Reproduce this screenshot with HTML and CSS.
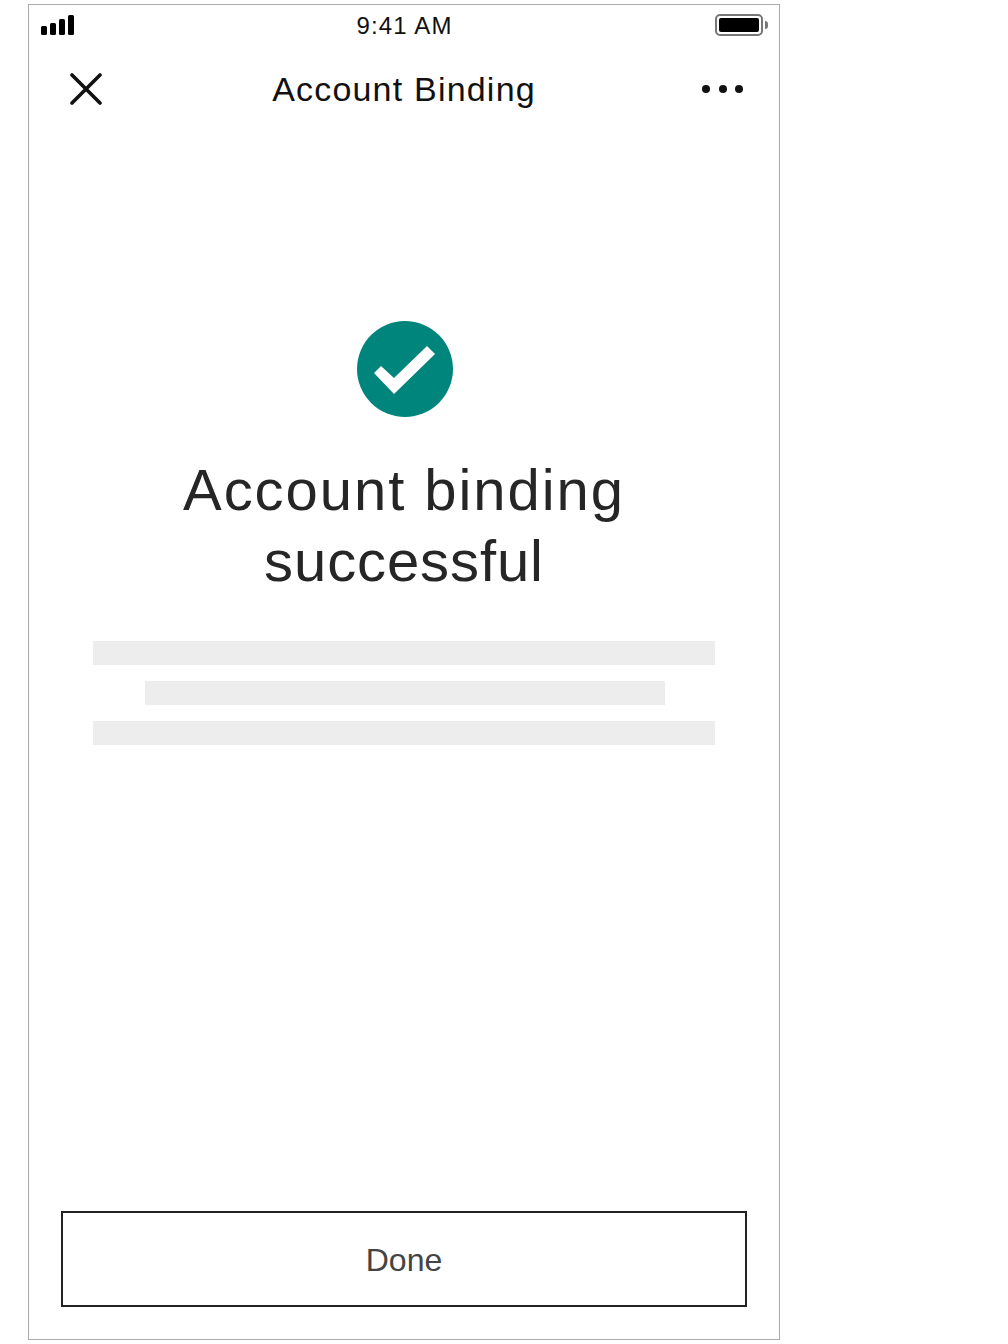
FILE: index.html
```html
<!DOCTYPE html>
<html lang="en">
<head>
  <meta charset="UTF-8">
  <meta name="viewport" content="width=device-width, initial-scale=1">
  <title>Account Binding</title>
  <link rel="stylesheet" href="styles.css">
</head>
<body>
  <div class="phone">
    <!-- Status bar -->
    <div class="status-bar">
      <div class="signal">
        <span class="signal-bar bar-1"></span>
        <span class="signal-bar bar-2"></span>
        <span class="signal-bar bar-3"></span>
        <span class="signal-bar bar-4"></span>
      </div>
      <div class="clock">9:41 AM</div>
      <div class="battery">
        <div class="battery-body"><div class="battery-level"></div></div>
        <div class="battery-cap"></div>
      </div>
    </div>

    <!-- Nav -->
    <div class="nav-bar">
      <svg class="close-icon" width="32" height="32" viewBox="0 0 32 32" aria-hidden="true">
        <path d="M2 2 L30 30 M30 2 L2 30" fill="none" stroke="#111" stroke-width="3.6" stroke-linecap="round"/>
      </svg>
      <div class="nav-title">Account Binding</div>
      <div class="more">
        <span class="more-dot"></span>
        <span class="more-dot"></span>
        <span class="more-dot"></span>
      </div>
    </div>

    <!-- Result -->
    <div class="result">
      <svg class="check-icon" width="96" height="96" viewBox="0 0 96 96" aria-hidden="true">
        <circle cx="48" cy="48" r="48" fill="#00857c"/>
        <path d="M17 52 L24 45 L37 57 L70 25 L78 33 L37 73 Z" fill="#fff"/>
      </svg>
      <h1 class="result-title">
        <span class="title-line line-first">Account binding</span>
        <span class="title-line line-second">successful</span>
      </h1>
      <div class="placeholder">
        <div class="placeholder-line line-wide"></div>
        <div class="placeholder-line line-short"></div>
        <div class="placeholder-line line-wide"></div>
      </div>
    </div>

    <!-- Footer -->
    <div class="footer">
      <button class="done-btn" type="button">Done</button>
    </div>
  </div>
</body>
</html>
```

FILE: styles.css
```css
* {
  margin: 0;
  padding: 0;
  box-sizing: border-box;
}

html, body {
  height: 100%;
  overflow: hidden;
  background: white;
  font-family: "Liberation Sans", Arial, sans-serif;
  color: #222;
}

.phone {
  width: 752px;
  height: 1336px;
  margin: 4px 0 0 28px;
  border: 1px solid #aaa;
  display: flex;
  flex-direction: column;
}

/* === STATUS BAR === */
.status-bar {
  height: 43px;
  padding: 0 11px 3px 12px;
  display: grid;
  grid-template-columns: 1fr auto 1fr;
  align-items: center;
}

.signal {
  width: 33px;
  height: 20px;
  display: flex;
  align-items: flex-end;
  gap: 3px;
}

.signal-bar {
  width: 6px;
  background: black;
  border-radius: 1.5px;
}

.bar-1 { height: 9px; }
.bar-2 { height: 12px; }
.bar-3 { height: 16px; }
.bar-4 { height: 20px; }

.clock {
  padding-top: 2px;
  font-size: 24px;
  color: #111;
  letter-spacing: 1.15px;
}

.battery {
  display: flex;
  align-items: center;
  justify-content: flex-end;
  gap: 2px;
}

.battery-body {
  width: 48px;
  height: 22px;
  padding: 2px;
  border: 2px solid #777;
  border-radius: 5px;
}

.battery-level {
  height: 100%;
  background: black;
  border-radius: 2px;
}

.battery-cap {
  width: 3px;
  height: 8px;
  background: #777;
  border-radius: 0 3px 3px 0;
}

/* === NAV === */
.nav-bar {
  height: 82px;
  padding: 0 36px;
  display: grid;
  grid-template-columns: 1fr auto 1fr;
  align-items: center;
}

.close-icon {
  margin-left: 5px;
}

.nav-title {
  font-size: 34px;
  color: #111;
  letter-spacing: 1.2px;
}

.more {
  width: 41px;
  justify-self: end;
  display: flex;
  justify-content: space-between;
}

.more-dot {
  width: 8px;
  height: 8px;
  border-radius: 50%;
  background: #111;
}

/* === RESULT === */
.result {
  flex: 1;
  padding-top: 191px;
  display: flex;
  flex-direction: column;
  align-items: center;
}

.check-icon {
  margin-left: 2px;
}

.result-title {
  margin-top: 37px;
  font-size: 58px;
  font-weight: 400;
  line-height: 71px;
  text-align: center;
  color: #262626;
}

.title-line {
  display: block;
}

.line-first { letter-spacing: 1.95px; }
.line-second { letter-spacing: 0.9px; }

.placeholder {
  margin-top: 45px;
  display: flex;
  flex-direction: column;
  align-items: center;
  gap: 16px;
}

.placeholder-line {
  height: 24px;
  background: #ededed;
}

.line-wide { width: 622px; }
.line-short {
  width: 520px;
  margin-left: 2px;
}

/* === FOOTER === */
.footer {
  padding: 0 32px 32px;
}

.done-btn {
  width: 100%;
  height: 96px;
  padding-top: 2px;
  border: 2px solid #222;
  background: white;
  font-family: inherit;
  font-size: 32px;
  color: #444;
}
```
